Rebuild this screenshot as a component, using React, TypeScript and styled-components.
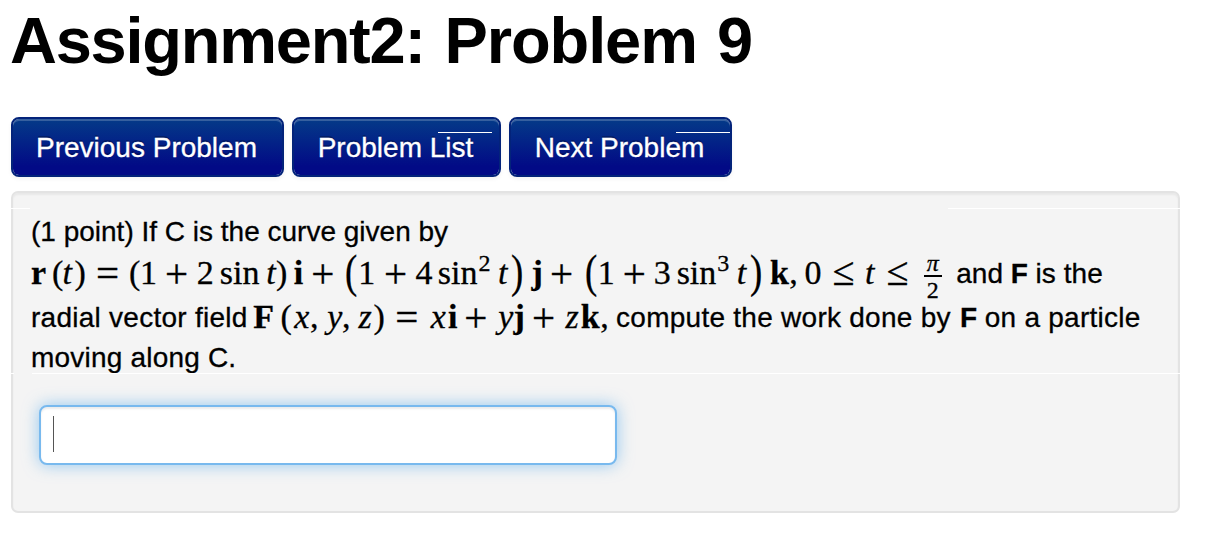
import styled, { createGlobalStyle, css } from 'styled-components';

const GlobalStyle = createGlobalStyle`
  body {
    margin: 0;
    background: #fff;
    color: #000;
    font-family: 'Liberation Sans', Arial, sans-serif;
    overflow: hidden;
  }
`;

const Page = styled.main`
  width: 1220px;
  height: 542px;
  box-sizing: border-box;
  padding: 4px 40px 0 11px;
`;

const Title = styled.h1`
  display: flex;
  margin: 0 0 33px -1px;
  height: 80px;
  font-size: 65px;
  line-height: 73px;
  font-weight: bold;
  white-space: nowrap;
`;

const TitleWord = styled.span<{ $width: number; $spacing?: number }>`
  flex: none;
  width: ${p => p.$width}px;
  letter-spacing: ${p => p.$spacing || 0}px;
`;

const ButtonRow = styled.nav`
  display: flex;
  gap: 8px;
  margin-bottom: 14px;
`;

const NavButton = styled.button<{ $width: number }>`
  position: relative;
  width: ${p => p.$width}px;
  height: 60px;
  padding: 2px 2px 0 0;
  border: 2px solid #03237a;
  border-radius: 8px;
  background: linear-gradient(#043a88, #020a86 85%) padding-box;
  box-shadow: inset 0 2px 0 rgba(255, 255, 255, 0.2), 0 2px 4px rgba(0, 0, 0, 0.05);
  color: #fff;
  font: 28px/40px 'Liberation Sans', Arial, sans-serif;
  -webkit-text-stroke: 0.3px;
  text-shadow: 0 -2px 0 rgba(0, 0, 0, 0.25);
  white-space: nowrap;
`;

const Panel = styled.section`
  position: relative;
  box-sizing: border-box;
  height: 322px;
  padding: 19px 18px;
  border: 2px solid #e3e3e3;
  border-radius: 7px;
  background: #f4f4f4;
  box-shadow: inset 0 2px 2px rgba(0, 0, 0, 0.05);
`;

const Hairline = styled.i<{ $left: number; $top: number; $width: number }>`
  position: absolute;
  left: ${p => p.$left}px;
  top: ${p => p.$top}px;
  width: ${p => p.$width}px;
  height: 1px;
  background: #fff;
`;

const Line = styled.div<{ $height?: number; $spacing?: number }>`
  height: ${p => p.$height || 40}px;
  font-size: 28px;
  line-height: ${p => (p.$height ? 44 : 40)}px;
  letter-spacing: ${p => p.$spacing || 0}px;
  -webkit-text-stroke: 0.3px;
  white-space: nowrap;
`;

const math = css`
  font-family: 'Liberation Serif', serif;
  font-size: 34px;
  vertical-align: -1px;
`;

const kinds = {
  text: css``,
  spaced: css`
    letter-spacing: 0.26px;
  `,
  strong: css`
    font-weight: bold;
  `,
  rm: math,
  it: css`
    ${math}
    font-style: italic;
  `,
  bf: css`
    ${math}
    font-weight: bold;
  `,
  op: css`
    ${math}
    font-size: 41px;
    vertical-align: -4px;
  `,
  rel: css`
    ${math}
    font-size: 40px;
    vertical-align: -2px;
  `,
  big: css`
    ${math}
    font-size: 46px;
    vertical-align: -4px;
    transform: scaleX(0.8);
    transform-origin: left;
  `,
  sup: css`
    ${math}
    font-size: 24px;
    vertical-align: 12px;
  `,
};

type Kind = keyof typeof kinds;

const Piece = styled.span<{ $kind: Kind; $width: number }>`
  display: inline-block;
  width: ${p => p.$width}px;
  line-height: 0;
  ${p => kinds[p.$kind]}
`;

const Fraction = styled.span`
  display: inline-flex;
  flex-direction: column;
  width: 18px;
  margin-right: 14.5px;
  vertical-align: 12px;
  text-align: center;
  font: 24px/20px 'Liberation Serif', serif;
`;

const Numerator = styled.em`
  height: 22px;
  border-bottom: 2px solid #000;
`;

const Denominator = styled.span`
  padding-top: 3px;
`;

const AnswerBox = styled.div`
  box-sizing: border-box;
  width: 578px;
  height: 60px;
  margin: 27px 0 0 8px;
  padding: 9px 12px;
  border: 2px solid #78b9ee;
  border-radius: 8px;
  background: #fff;
  box-shadow: inset 0 2px 2px rgba(0, 0, 0, 0.075), 0 0 16px rgba(82, 168, 236, 0.6);
`;

const Caret = styled.div`
  width: 1px;
  height: 36px;
  background: #555;
`;

// kind, text, left edge
type Token = [Kind, string, number];

const curve: Token[] = [
  ['bf', 'r', 30.5],
  ['rm', '(', 51.4],
  ['it', 't', 62],
  ['rm', ')', 74],
  ['op', '=', 95.5],
  ['rm', '(', 128.4],
  ['rm', '1', 139.6],
  ['op', '+', 164.6],
  ['rm', '2', 196.4],
  ['rm', 'sin', 219.4],
  ['it', 't', 265.7],
  ['rm', ')', 275.5],
  ['bf', 'i', 293.4],
  ['op', '+', 310.8],
  ['big', '(', 344.6],
  ['rm', '1', 357.8],
  ['op', '+', 383.5],
  ['rm', '4', 415],
  ['rm', 'sin', 437.3],
  ['sup', '2', 478],
  ['it', 't', 497.7],
  ['big', ')', 510.5],
  ['bf', 'j', 531],
  ['op', '+', 549.7],
  ['big', '(', 584.2],
  ['rm', '1', 597.3],
  ['op', '+', 622.5],
  ['rm', '3', 653.5],
  ['rm', 'sin', 676.3],
  ['sup', '3', 717],
  ['it', 't', 736.4],
  ['big', ')', 749.4],
  ['bf', 'k', 769.6],
  ['rm', ',', 789],
  ['rm', '0', 804.3],
  ['rel', '≤', 832.5],
  ['it', 't', 864.7],
  ['rel', '≤', 886.5],
];

const condition: Token[] = [
  ['text', 'and', 956],
  ['strong', 'F', 1010.5],
  ['text', 'is', 1035.2],
  ['text', 'the', 1063.6],
];

const field: Token[] = [
  ['spaced', 'radial vector field', 30.5],
  ['bf', 'F', 252.8],
  ['rm', '(', 280],
  ['it', 'x', 293.8],
  ['rm', ',', 309.6],
  ['it', 'y', 326.8],
  ['rm', ',', 341.5],
  ['it', 'z', 358],
  ['rm', ')', 373],
  ['op', '=', 394.7],
  ['it', 'x', 430.2],
  ['bf', 'i', 447.5],
  ['op', '+', 463.8],
  ['it', 'y', 497.8],
  ['bf', 'j', 513],
  ['op', '+', 531.7],
  ['it', 'z', 565],
  ['bf', 'k', 580.4],
  ['rm', ',', 599.8],
  ['spaced', 'compute the work done by', 615.7],
  ['strong', 'F', 959.5],
  ['spaced', 'on a particle', 984.3],
];

function Pieces({ tokens, end }: { tokens: Token[]; end: number }) {
  return (
    <>
      {tokens.map(([kind, text, left], i) => (
        <Piece key={i} $kind={kind} $width={(tokens[i + 1]?.[2] ?? end) - left}>
          {text}
        </Piece>
      ))}
    </>
  );
}

export default function App() {
  return (
    <Page>
      <GlobalStyle />
      <Title>
        <TitleWord $width={434.5} $spacing={-1.25}>Assignment2:</TitleWord>
        <TitleWord $width={272.5} $spacing={-1.1}>Problem</TitleWord>
        <TitleWord $width={36}>9</TitleWord>
      </Title>
      <ButtonRow>
        <NavButton $width={273}>Previous Problem</NavButton>
        <NavButton $width={209}>
          Problem List
          <Hairline $left={144} $top={13} $width={54} />
        </NavButton>
        <NavButton $width={223}>
          Next Problem
          <Hairline $left={165} $top={13} $width={54} />
        </NavButton>
      </ButtonRow>
      <Panel>
        <Line>(1 point) If C is the curve given by</Line>
        <Line $height={46}>
          <Pieces tokens={curve} end={923.5} />
          <Fraction>
            <Numerator>π</Numerator>
            <Denominator>2</Denominator>
          </Fraction>
          <Pieces tokens={condition} end={1105} />
        </Line>
        <Line>
          <Pieces tokens={field} end={1145} />
        </Line>
        <Line $spacing={0.2}>moving along C.</Line>
        <AnswerBox>
          <Caret />
        </AnswerBox>
        <Hairline $left={-2} $top={15} $width={19} />
        <Hairline $left={935} $top={15} $width={232} />
        <Hairline $left={-2} $top={180} $width={3} />
        <Hairline $left={19} $top={180} $width={1148} />
      </Panel>
    </Page>
  );
}
